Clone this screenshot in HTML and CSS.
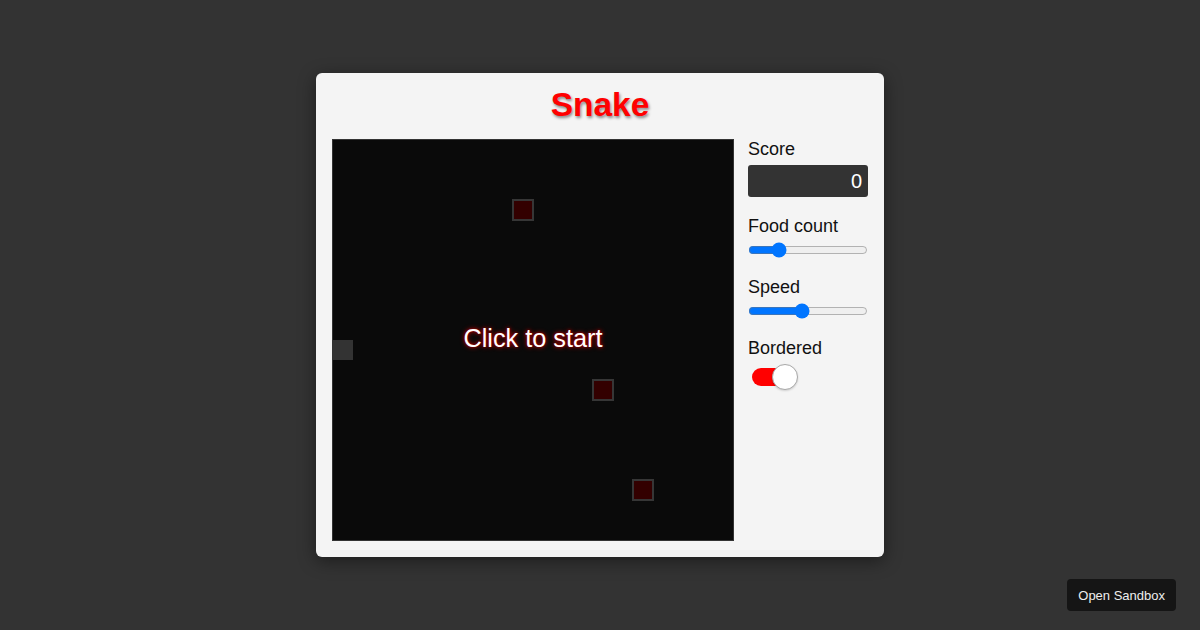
FILE: index.html
```html
<!DOCTYPE html>
<html lang="en">
<head>
<meta charset="utf-8">
<title>Snake</title>
<link rel="stylesheet" href="styles.css">
</head>
<body>
  <main class="game">
    <h1 class="game-title">Snake</h1>
    <div class="game-body">
      <div class="board">
        <div class="cell snake" style="grid-column: 1; grid-row: 11;"></div>
        <div class="cell food" style="grid-column: 10; grid-row: 4;"></div>
        <div class="cell food" style="grid-column: 14; grid-row: 13;"></div>
        <div class="cell food" style="grid-column: 16; grid-row: 18;"></div>
        <div class="board-message">Click to start</div>
      </div>
      <aside class="controls">
        <div class="control">
          <div class="control-label">Score</div>
          <div class="score">0</div>
        </div>
        <div class="control">
          <label class="control-label" for="food">Food count</label>
          <input class="slider" id="food" type="range" min="1" max="10" value="3">
        </div>
        <div class="control">
          <label class="control-label" for="speed">Speed</label>
          <input class="slider" id="speed" type="range" min="1" max="10" value="5">
        </div>
        <div class="control">
          <div class="control-label">Bordered</div>
          <div class="toggle">
            <span class="toggle-track"></span>
            <span class="toggle-knob"></span>
          </div>
        </div>
      </aside>
    </div>
  </main>
  <a class="sandbox-btn" href="#">Open Sandbox</a>
</body>
</html>
```
FILE: styles.css
```css
html, body {
  margin: 0;
  height: 100%;
}

body {
  background: #333333;
  font-family: "Liberation Sans", Arial, sans-serif;
  display: flex;
  align-items: center;
  justify-content: center;
}

.game {
  width: 568px;
  box-sizing: border-box;
  padding: 13px 16px 16px;
  background: #f4f4f4;
  border-radius: 6px;
  box-shadow: 0 4px 18px rgba(0, 0, 0, 0.45);
}

.game-title {
  margin: 0 0 16px;
  font-size: 33.5px;
  line-height: 37px;
  font-weight: bold;
  text-align: center;
  color: #ff0000;
  text-shadow: 1px 2px 3px rgba(0, 0, 0, 0.45);
}

.game-body {
  display: flex;
  gap: 14px;
  align-items: flex-start;
}

/* playing field: 20 x 20 cells of 20px */
.board {
  display: grid;
  grid-template-columns: repeat(20, 20px);
  grid-template-rows: repeat(20, 20px);
  border: 1px solid #333333;
  background: #0a0a0a;
}

.cell {
  width: 20px;
  height: 20px;
}

.snake {
  background: #333333;
}

.food {
  background: #330000;
  box-shadow: inset 0 0 0 1px #363636;
  outline: 1px solid #363636;
}

.board-message {
  grid-column: 1 / -1;
  grid-row: 1 / -1;
  align-self: center;
  justify-self: center;
  margin-bottom: 4px;
  font-size: 25.3px;
  color: #ffffff;
  text-shadow: 0 0 5px #c00000, 0 0 3px #900000, 0 0 1px #600000;
}

.controls {
  width: 120px;
  display: flex;
  flex-direction: column;
  gap: 19px;
}

.control {
  display: flex;
  flex-direction: column;
  gap: 5px;
}

.control-label {
  font-size: 18px;
  line-height: 21px;
  color: #111111;
}

.score {
  height: 32px;
  box-sizing: border-box;
  padding: 0 6px;
  background: #333333;
  border-radius: 3px;
  color: #ffffff;
  font-size: 20px;
  line-height: 32px;
  text-align: right;
}

.slider {
  display: block;
  width: 120px;
  height: 16px;
  margin: 0;
}

.toggle {
  display: flex;
  align-items: center;
  height: 26px;
  padding-left: 4px;
}

.toggle-track {
  width: 34px;
  height: 18px;
  border-radius: 9px;
  background: #ff0000;
}

.toggle-knob {
  width: 24px;
  height: 24px;
  margin-left: -14px;
  border-radius: 50%;
  background: #ffffff;
  border: 1px solid #a8a8a8;
  box-shadow: 0 1px 2px rgba(0, 0, 0, 0.15);
}

.sandbox-btn {
  position: fixed;
  right: 24px;
  bottom: 19px;
  height: 32px;
  padding: 0 11px;
  display: flex;
  align-items: center;
  background: #151515;
  border-radius: 4px;
  color: #eeeeee;
  font-size: 13px;
  text-decoration: none;
}
```
